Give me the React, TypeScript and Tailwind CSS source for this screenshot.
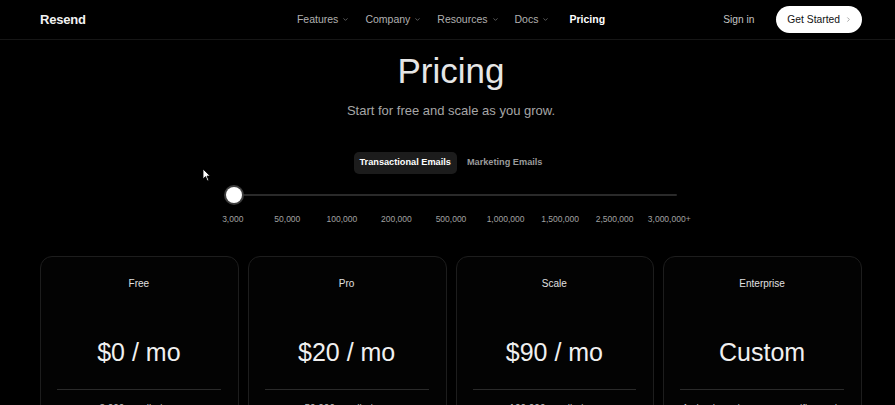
import React from "react";

const Chev = () => (
  <svg width="7" height="7" viewBox="0 0 24 24" fill="none" stroke="currentColor" strokeWidth="2.5" strokeLinecap="round" strokeLinejoin="round" className="ml-[4px] text-[#7a7a7a]">
    <path d="M6 9l6 6 6-6" />
  </svg>
);

const labels = ["3,000", "50,000", "100,000", "200,000", "500,000", "1,000,000", "1,500,000", "2,500,000", "3,000,000+"];

const plans = [
  { name: "Free", price: "$0 / mo", sub: "3,000 emails / mo" },
  { name: "Pro", price: "$20 / mo", sub: "50,000 emails / mo" },
  { name: "Scale", price: "$90 / mo", sub: "100,000 emails / mo" },
  { name: "Enterprise", price: "Custom", sub: "A plan based on your specific needs" },
];

export default function App() {
  return (
    <div className="relative w-[895px] h-[405px] overflow-hidden bg-black text-white" style={{ fontFamily: "'Liberation Sans', Arial, sans-serif" }}>
      <header className="h-[40px] border-b border-[#161616]">
        <div className="ml-[40px] w-[822px] h-full grid grid-cols-[1fr_auto_1fr] items-center">
          <div className="text-[13px] font-bold tracking-[-0.2px] text-[#f2f2f2]">Resend</div>
          <nav className="flex items-center text-[10.5px] text-[#b0b0b0] gap-[16px] whitespace-nowrap">
            <span className="flex items-center">Features<Chev /></span>
            <span className="flex items-center">Company<Chev /></span>
            <span className="flex items-center">Resources<Chev /></span>
            <span className="flex items-center">Docs<Chev /></span>
            <span className="text-white font-bold ml-[4px]">Pricing</span>
          </nav>
          <div className="flex items-center justify-end whitespace-nowrap">
            <span className="text-[10.2px] text-[#c4c4c4] mr-[22px]">Sign in</span>
            <span className="h-[27px] pl-[11px] pr-[10px] rounded-full bg-white text-[#111] text-[10.3px] flex items-center">
              Get Started
              <svg width="7" height="7" viewBox="0 0 24 24" fill="none" stroke="#888" strokeWidth="2.5" strokeLinecap="round" strokeLinejoin="round" className="ml-[5px]">
                <path d="M9 6l6 6-6 6" />
              </svg>
            </span>
          </div>
        </div>
      </header>

      <main className="ml-[40px] w-[822px] flex flex-col items-center">
        <h1 className="mt-[11px] text-[35px] leading-[40px] font-normal text-[#e6e6e6]">Pricing</h1>
        <p className="mt-[12px] text-[13px] leading-[16px] text-[#a6a6a6]">Start for free and scale as you grow.</p>

        <div className="mt-[33px] flex items-center gap-[4px]">
          <span className="h-[22px] px-[6px] rounded-[5px] bg-[#1c1c1c] text-[9.2px] font-bold text-white flex items-center">Transactional Emails</span>
          <span className="h-[22px] px-[6px] text-[9.2px] font-bold text-[#9a9a9a] flex items-center">Marketing Emails</span>
        </div>

        <div className="relative mt-[13px] w-[491px] h-[16px]">
          <div className="absolute left-[28px] right-[20px] top-[7px] h-[2px] rounded-full bg-[#2a2a2a]" />
          <div className="absolute left-[20px] top-0 w-[16px] h-[16px] rounded-full bg-white ring-[2px] ring-[#3e3e3e]" />
        </div>
        <div className="mt-[10px] w-[491px] grid grid-cols-9 text-[8.5px] leading-[12px] text-[#a0a0a0]">
          {labels.map((l) => (
            <span key={l} className="text-center whitespace-nowrap">{l}</span>
          ))}
        </div>

        <div className="mt-[31px] w-full grid grid-cols-4 gap-[9px]">
          {plans.map((p) => (
            <div key={p.name} className="h-[170px] rounded-[12px] border border-[#1d1d1d] bg-[#030303] pl-[16px] pr-[17px] flex flex-col items-center">
              <div className="mt-[21px] text-[10px] leading-[12px] text-[#e0e0e0]">{p.name}</div>
              <div className="mt-[47px] text-[25px] leading-[30px] text-[#f0f0f0] whitespace-nowrap">{p.price}</div>
              <div className="mt-[22px] w-full h-px bg-[#2a2a2a]" />
              <div className="mt-[13px] text-[10px] leading-[12px] text-[#bdbdbd] whitespace-nowrap">{p.sub}</div>
            </div>
          ))}
        </div>
      </main>

      <svg className="absolute left-[202px] top-[168px]" width="9" height="14" viewBox="0 0 9 14">
        <path d="M1 1 L1 11 L3.5 8.6 L5.4 12.8 L6.8 12.2 L5 8.1 L8.2 8.1 Z" fill="#fff" stroke="#000" strokeWidth="0.8" />
      </svg>
    </div>
  );
}
